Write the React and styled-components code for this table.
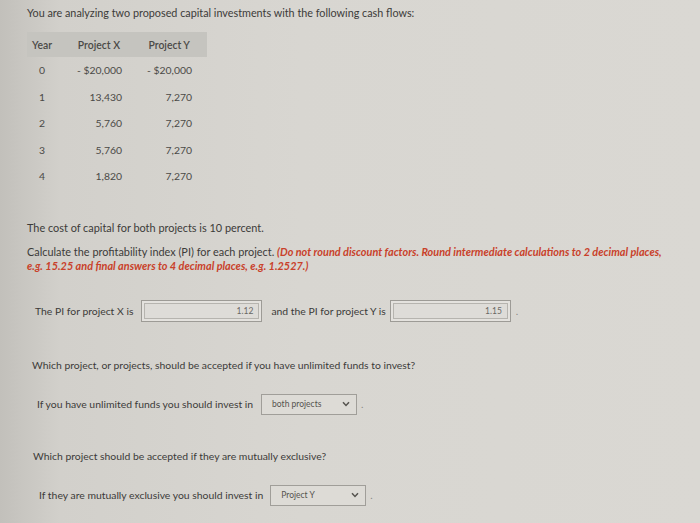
import styled, { createGlobalStyle } from "styled-components";

const GlobalStyle = createGlobalStyle`
    html, body {
        margin: 0;
        padding: 0;
    }
    body {
        width: 700px;
        height: 523px;
        overflow: hidden;
        font-family: Lato, "Open Sans", sans-serif;
        color: #3c3b39;
        background: linear-gradient(90deg, #c2c0bb 0px, #d2d0cb 60px, #d8d6d1 300px, #dad8d3 700px);
    }
`;

const Page = styled.div`
    width: 700px;
    height: 523px;
    box-sizing: border-box;
    padding: 6px 20px 0 27px;
    font-size: 10.4px;
`;

const Text = styled.p`
    margin: ${(p) => p.$mt || 0}px 0 0 ${(p) => p.$ml || 0}px;
    max-width: ${(p) => p.$max || 660}px;
    line-height: 14px;
    font-size: ${(p) => p.$size || 10.4}px;
`;

const Hint = styled.span`
    color: #c9412a;
    font-style: italic;
    font-weight: 700;
`;

const CashTable = styled.table`
    margin-top: 12px;
    border-collapse: collapse;
    font-size: 10.4px;
`;

const HeadCell = styled.th`
    background: #c5c4bf;
    height: 25px;
    padding: 0 ${(p) => p.$pr || 0}px 0 0;
    width: ${(p) => p.$w}px;
    text-align: ${(p) => p.$align || "right"};
    font-weight: 600;
    color: #4a4946;
`;

const Cell = styled.td`
    height: 26.5px;
    padding: 0 ${(p) => p.$pr || 0}px 0 0;
    text-align: ${(p) => p.$align || "right"};
    color: #4a4946;
`;

const AnswerRow = styled.div`
    display: flex;
    align-items: center;
    margin: ${(p) => p.$mt}px 0 0 ${(p) => p.$ml}px;
`;

const Label = styled.span`
    margin: 0 ${(p) => p.$gap || 4}px 0 ${(p) => p.$before || 0}px;
`;

const NumberBox = styled.div`
    width: 121px;
    height: 22px;
    box-sizing: border-box;
    border: 1px solid #9d9b96;
    box-shadow: inset 0 0 0 2px #e4e2de, inset 0 0 0 3px #b6b4af;
    background: #dedcd8;
    display: flex;
    align-items: center;
    justify-content: flex-end;
    padding-right: 8px;
    font-size: 8.5px;
    color: #6a6864;
`;

const Dot = styled.span`
    margin-left: ${(p) => p.$ml || 5}px;
    color: #8a8884;
`;

const Select = styled.div`
    width: 96px;
    height: 21px;
    box-sizing: border-box;
    border: 1px solid #a09e99;
    background: #dddbd6;
    display: flex;
    align-items: center;
    justify-content: space-between;
    padding: 0 6px 0 10px;
    font-size: 8.5px;
    color: #55534f;
`;

const Chevron = () => (
    <svg width="8" height="6" viewBox="0 0 8 6">
        <path d="M1 1.2 L4 4.4 L7 1.2" fill="none" stroke="#55534f" strokeWidth="1.5" />
    </svg>
);

const rows = [
    ["0", "- $20,000", "- $20,000"],
    ["1", "13,430", "7,270"],
    ["2", "5,760", "7,270"],
    ["3", "5,760", "7,270"],
    ["4", "1,820", "7,270"],
];

function App() {
    return (
        <Page>
            <GlobalStyle />
            <Text $size={10.8}>You are analyzing two proposed capital investments with the following cash flows:</Text>

            <CashTable>
                <thead>
                    <tr>
                        <HeadCell $w={30} $align="center">Year</HeadCell>
                        <HeadCell $w={63} $pr={7}>Project X</HeadCell>
                        <HeadCell $w={63} $pr={17}>Project Y</HeadCell>
                    </tr>
                </thead>
                <tbody>
                    {rows.map((r) => (
                        <tr key={r[0]}>
                            <Cell $align="center">{r[0]}</Cell>
                            <Cell $pr={5}>{r[1]}</Cell>
                            <Cell $pr={15}>{r[2]}</Cell>
                        </tr>
                    ))}
                </tbody>
            </CashTable>

            <Text $mt={31} $size={10.9}>The cost of capital for both projects is 10 percent.</Text>
            <Text $mt={10} $size={10.9} $max={645}>
                Calculate the profitability index (PI) for each project. <Hint>(Do not round discount factors. Round intermediate calculations to 2 decimal places, e.g. 15.25 and final answers to 4 decimal places, e.g. 1.2527.)</Hint>
            </Text>

            <AnswerRow $mt={27} $ml={8}>
                <Label $gap={8}>The PI for project X is</Label>
                <NumberBox>1.12</NumberBox>
                <Label $before={9} $gap={4}>and the PI for project Y is</Label>
                <NumberBox>1.15</NumberBox>
                <Dot>.</Dot>
            </AnswerRow>

            <Text $mt={36} $ml={5}>Which project, or projects, should be accepted if you have unlimited funds to invest?</Text>
            <AnswerRow $mt={22} $ml={10}>
                <Label $gap={8}>If you have unlimited funds you should invest in</Label>
                <Select>
                    both projects
                    <Chevron />
                </Select>
                <Dot $ml={4}>.</Dot>
            </AnswerRow>

            <Text $mt={34} $ml={6}>Which project should be accepted if they are mutually exclusive?</Text>
            <AnswerRow $mt={22} $ml={12}>
                <Label $gap={7}>If they are mutually exclusive you should invest in</Label>
                <Select>
                    Project Y
                    <Chevron />
                </Select>
                <Dot $ml={4}>.</Dot>
            </AnswerRow>
        </Page>
    );
}

export default App;
